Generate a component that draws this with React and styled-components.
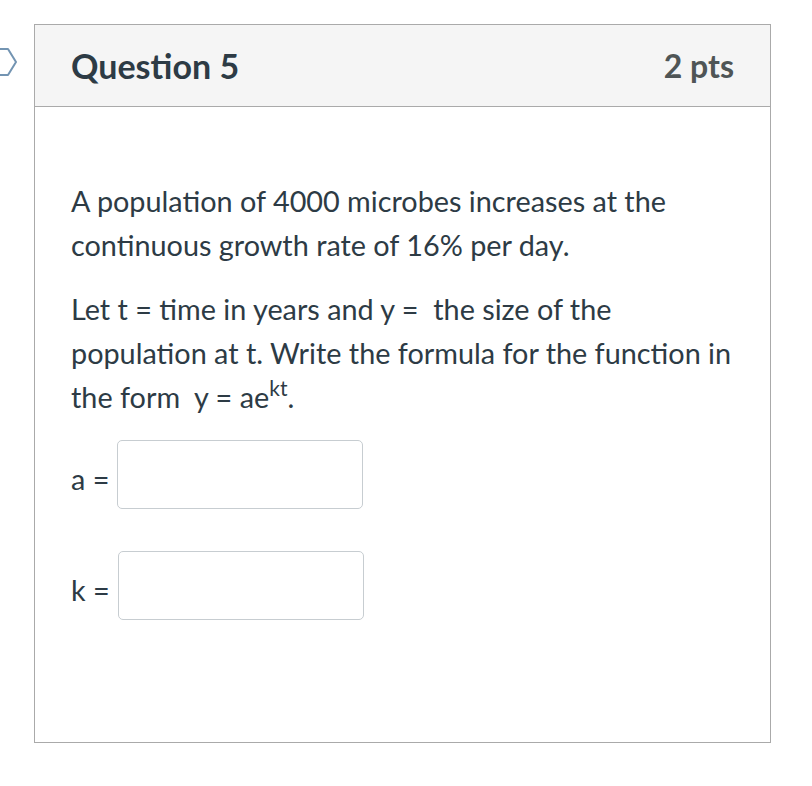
import React from 'react'
import styled, { createGlobalStyle } from 'styled-components'

const GlobalStyle = createGlobalStyle`
  html, body {
    margin: 0;
    padding: 0;
    background: #fff;
  }
  body {
    font-family: Lato, "Open Sans", "Liberation Sans", sans-serif;
    color: #2d3b45;
  }
`

const Page = styled.div`
  position: relative;
  padding: 24px 0 0 34px;
  width: 812px;
  height: 786px;
  box-sizing: border-box;
`

const Flag = styled.svg`
  position: absolute;
  left: 0;
  top: 46px;
`

const Card = styled.div`
  width: 737px;
  border: 1px solid #aaaaaa;
  box-sizing: border-box;
`

const Header = styled.div`
  display: flex;
  align-items: center;
  justify-content: space-between;
  height: 81px;
  padding: 0 36px;
  background: #f5f5f5;
  border-bottom: 1px solid #aaaaaa;
`

const Title = styled.h2`
  margin: 0;
  font-size: 34px;
  font-weight: 700;
  color: #2d3b45;
`

const Points = styled.div`
  font-size: 32px;
  font-weight: 700;
  color: #4f5556;
`

const Body = styled.div`
  padding: 72px 18px 122px 36px;
  font-size: 28.8px;
  line-height: 44px;
`

const Para = styled.p`
  margin: 0 0 20px 0;
`

const Sup = styled.sup`
  font-size: 21px;
  line-height: 0;
  vertical-align: 0.55em;
`

const Answers = styled.div`
  display: flex;
  flex-direction: column;
  gap: 42px;
  margin-top: 21px;
`

const AnswerRow = styled.label`
  display: flex;
  align-items: flex-end;
  gap: 8px;
`

const Label = styled.span`
  font-size: 28.8px;
  line-height: 44px;
  padding-bottom: 8px;
  min-width: 38px;
`

const Input = styled.input`
  width: 246px;
  height: 69px;
  box-sizing: border-box;
  border: 1px solid #c7cdd1;
  border-radius: 5px;
  background: #fff;
  font: inherit;
  padding: 0 12px;
  outline: none;
`

export default function App() {
  return (
    <>
      <GlobalStyle />
      <Page>
        <Flag width="20" height="32" viewBox="0 0 20 32">
          <path
            d="M-4 3 H8 L16 16 L8 29 H-4"
            fill="none"
            stroke="#7394b2"
            strokeWidth="2"
            strokeLinejoin="round"
          />
        </Flag>
        <Card>
          <Header>
            <Title>Question 5</Title>
            <Points>2 pts</Points>
          </Header>
          <Body>
            <Para>
              A population of 4000 microbes increases at the
              <br />
              continuous growth rate of 16% per day.
            </Para>
            <Para>
              Let t = time in years and y = &nbsp;the size of the
              <br />
              population at t. Write the formula for the function in
              <br />
              the form &nbsp;y = ae<Sup>kt</Sup>.
            </Para>
            <Answers>
              <AnswerRow>
                <Label>a =</Label>
                <Input type="text" />
              </AnswerRow>
              <AnswerRow>
                <Label>k =</Label>
                <Input type="text" />
              </AnswerRow>
            </Answers>
          </Body>
        </Card>
      </Page>
    </>
  )
}
